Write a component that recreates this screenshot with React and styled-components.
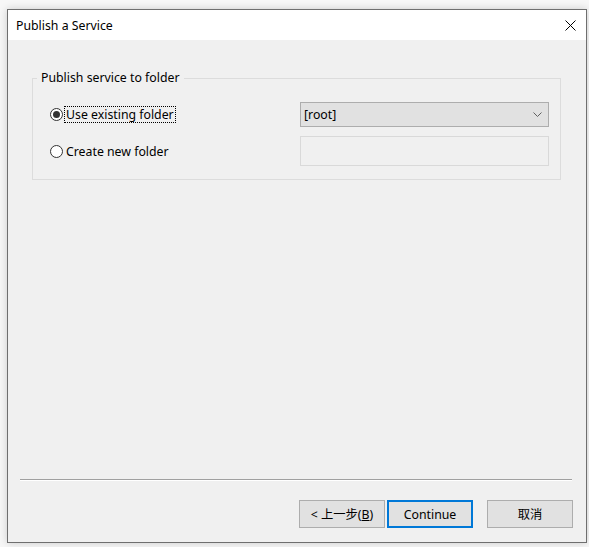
import styled, { createGlobalStyle } from "styled-components";

const GlobalStyle = createGlobalStyle`
  html, body {
    margin: 0;
    padding: 0;
    background: #f7f7f7;
  }
  body {
    font-family: "Noto Sans", "Noto Sans CJK SC", sans-serif;
    font-size: 12.3px;
    color: #000000;
  }
`;

const Page = styled.div`
  width: 589px;
  height: 547px;
  padding: 9px 2px 4px 7px;
  box-sizing: border-box;
`;

const Window = styled.div`
  width: 580px;
  height: 534px;
  box-sizing: border-box;
  border: 1px solid #6f6f6f;
  background: #f0f0f0;
  box-shadow: 0 0 8px rgba(0, 0, 0, 0.18);
  display: flex;
  flex-direction: column;
`;

const TitleBar = styled.div`
  height: 30px;
  background: #ffffff;
  display: flex;
  align-items: center;
  justify-content: space-between;
  padding: 0 10px 0 8px;
`;

const CloseButton = styled.div`
  width: 12px;
  height: 12px;
  display: flex;
  align-items: center;
  justify-content: center;
`;

const Body = styled.div`
  flex: 1;
  padding: 30px 25px 0 24px;
`;

const Group = styled.fieldset`
  margin: 0;
  padding: 16px 11px 13px 17px;
  border: 1px solid #dcdcdc;
  display: grid;
  grid-template-columns: 1fr 249px;
  row-gap: 9px;
  align-items: center;
`;

const Legend = styled.legend`
  padding: 0 4px;
  margin-left: -13px;
  line-height: 16px;
`;

const RadioRow = styled.label`
  display: flex;
  align-items: center;
  gap: 1px;
  height: ${(p) => p.$h}px;
`;

const RadioCircle = styled.span`
  width: 13px;
  height: 13px;
  box-sizing: border-box;
  border-radius: 50%;
  border: 1px solid #333333;
  background: #ffffff;
  display: flex;
  align-items: center;
  justify-content: center;
  &::after {
    content: "";
    width: 7px;
    height: 7px;
    border-radius: 50%;
    background: ${(p) => (p.$checked ? "#333333" : "transparent")};
  }
`;

const RadioText = styled.span`
  padding: 0 1px;
  line-height: 15px;
  border: 1px dotted ${(p) => (p.$focus ? "#000000" : "transparent")};
`;

const Combo = styled.div`
  height: 25px;
  box-sizing: border-box;
  border: 1px solid #adadad;
  background: #e1e1e1;
  display: flex;
  align-items: center;
  justify-content: space-between;
  padding: 0 6px 0 3px;
`;

const TextBox = styled.div`
  height: 30px;
  box-sizing: border-box;
  border: 1px solid #d9d9d9;
  background: #f0f0f0;
`;

const Footer = styled.div`
  padding: 0 14px 14px 12px;
`;

const Separator = styled.div`
  height: 1px;
  background: #a0a0a0;
  border-bottom: 1px solid #ffffff;
  margin-bottom: 19px;
`;

const ButtonRow = styled.div`
  display: flex;
  justify-content: flex-end;
  margin-right: -1px;
`;

const Button = styled.button`
  width: 86px;
  height: 28px;
  box-sizing: border-box;
  margin-left: ${(p) => p.$gap}px;
  border: ${(p) => (p.$default ? "2px solid #0078d7" : "1px solid #adadad")};
  background: #e1e1e1;
  font-family: "Noto Sans", "Noto Sans CJK SC", sans-serif;
  font-size: 12.3px;
  color: #000000;
  padding: 0;
  u {
    text-decoration: underline;
  }
`;

export default function App() {
  return (
    <>
      <GlobalStyle />
      <Page>
        <Window>
          <TitleBar>
            <span>Publish a Service</span>
            <CloseButton>
              <svg width="11" height="11" viewBox="0 0 11 11">
                <path d="M0.5 0.5 L10.5 10.5 M10.5 0.5 L0.5 10.5" stroke="#000" strokeWidth="1" fill="none" />
              </svg>
            </CloseButton>
          </TitleBar>
          <Body>
            <Group>
              <Legend>Publish service to folder</Legend>
              <RadioRow $h={25}>
                <RadioCircle $checked />
                <RadioText $focus>Use existing folder</RadioText>
              </RadioRow>
              <Combo>
                <span>[root]</span>
                <svg width="9" height="5" viewBox="0 0 9 5">
                  <path d="M0.5 0.5 L4.5 4.5 L8.5 0.5" stroke="#606060" strokeWidth="1" fill="none" />
                </svg>
              </Combo>
              <RadioRow $h={30}>
                <RadioCircle />
                <RadioText>Create new folder</RadioText>
              </RadioRow>
              <TextBox />
            </Group>
          </Body>
          <Footer>
            <Separator />
            <ButtonRow>
              <Button $gap={0}>&lt; 上一步(<u>B</u>)</Button>
              <Button $gap={2} $default>Continue</Button>
              <Button $gap={14}>取消</Button>
            </ButtonRow>
          </Footer>
        </Window>
      </Page>
    </>
  );
}
